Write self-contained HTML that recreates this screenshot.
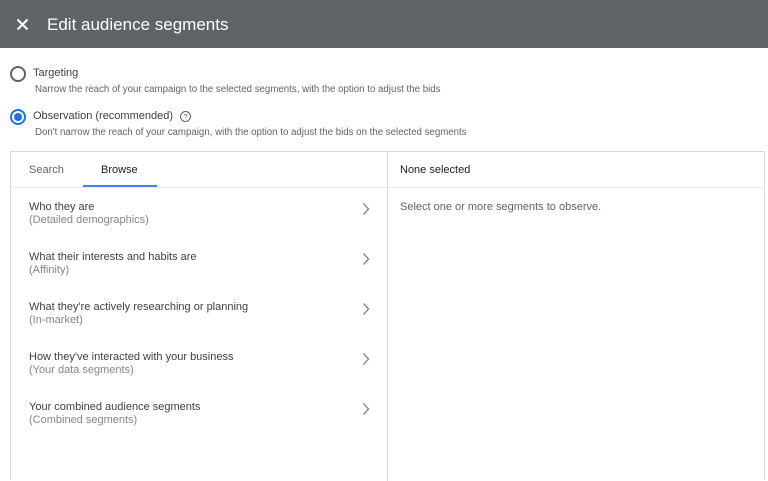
<!DOCTYPE html>
<html><head><style>
*{margin:0;padding:0;box-sizing:border-box}
body{width:768px;height:480px;background:#fff;font-family:"Liberation Sans",Arial,sans-serif;position:relative;overflow:hidden;color:#3c4043}
.hdr{position:absolute;left:0;top:0;width:768px;height:48px;background:#5f6368}
.hdr .t{position:absolute;left:47px;top:15px;font-size:17px;color:#fff}
.a{position:absolute;white-space:nowrap}
.radio{position:absolute;width:16px;height:16px;border:2px solid #5f6368;border-radius:50%}
.box{position:absolute;left:10px;top:151px;width:755px;height:329px;border:1px solid #dadce0;border-bottom:none}
.t1{font-size:11px;color:#3c4043}
.t2{font-size:11px;color:#80868b}
.s{font-size:9.7px;color:#5f6368}
</style></head><body>
<div class="hdr">
<svg style="position:absolute;left:16px;top:18px" width="13" height="13" viewBox="0 0 13 13"><path d="M1.5 1.5L11.5 11.5M11.5 1.5L1.5 11.5" stroke="#fff" stroke-width="2"/></svg>
<div class="t">Edit audience segments</div>
</div>
<div class="radio" style="left:10px;top:66px"></div>
<div class="a t1" style="left:33px;top:67px">Targeting</div>
<div class="a s" style="left:35px;top:84px">Narrow the reach of your campaign to the selected segments, with the option to adjust the bids</div>
<div class="radio" style="left:10px;top:109px;border-color:#1a73e8"></div>
<div style="position:absolute;left:14px;top:113px;width:8px;height:8px;border-radius:50%;background:#1a73e8"></div>
<div class="a t1" style="left:33px;top:110px">Observation (recommended)</div>
<svg style="position:absolute;left:179px;top:110px" width="13" height="13" viewBox="0 0 13 13"><circle cx="6.5" cy="6.5" r="5" fill="none" stroke="#5f6368" stroke-width="1"/><text x="6.5" y="9.2" font-size="7.5" text-anchor="middle" fill="#5f6368" font-family="Liberation Sans">?</text></svg>
<div class="a s" style="left:35px;top:127px">Don't narrow the reach of your campaign, with the option to adjust the bids on the selected segments</div>
<div class="box">
<div style="position:absolute;left:376px;top:0;width:1px;height:329px;background:#dadce0"></div>
<div style="position:absolute;left:0;top:35px;width:753px;height:1px;background:#e8eaed"></div>
<div style="position:absolute;left:72px;top:33px;width:74px;height:2px;background:#4285f4"></div>
</div>
<div class="a t1" style="left:29px;top:164px;color:#5f6368">Search</div>
<div class="a t1" style="left:101px;top:164px;color:#202124">Browse</div>
<div class="a t1" style="left:400px;top:164px;color:#202124">None selected</div>
<div class="a t1" style="left:400px;top:201px;color:#5f6368">Select one or more segments to observe.</div>
<div class="a t1" style="left:29px;top:201px">Who they are</div>
<div class="a t2" style="left:29px;top:214px">(Detailed demographics)</div>
<div class="a t1" style="left:29px;top:251px">What their interests and habits are</div>
<div class="a t2" style="left:29px;top:264px">(Affinity)</div>
<div class="a t1" style="left:29px;top:301px">What they're actively researching or planning</div>
<div class="a t2" style="left:29px;top:314px">(In-market)</div>
<div class="a t1" style="left:29px;top:351px">How they've interacted with your business</div>
<div class="a t2" style="left:29px;top:364px">(Your data segments)</div>
<div class="a t1" style="left:29px;top:401px">Your combined audience segments</div>
<div class="a t2" style="left:29px;top:414px">(Combined segments)</div>
<svg style="position:absolute;left:360px;top:202px" width="12" height="230" viewBox="0 0 12 230">
<g fill="none" stroke="#70757a" stroke-width="1.2">
<path d="M3.5 1.5L8.5 7L3.5 12.5"/><path d="M3.5 51.5L8.5 57L3.5 62.5"/><path d="M3.5 101.5L8.5 107L3.5 112.5"/><path d="M3.5 151.5L8.5 157L3.5 162.5"/><path d="M3.5 201.5L8.5 207L3.5 212.5"/>
</g></svg>
</body></html>
